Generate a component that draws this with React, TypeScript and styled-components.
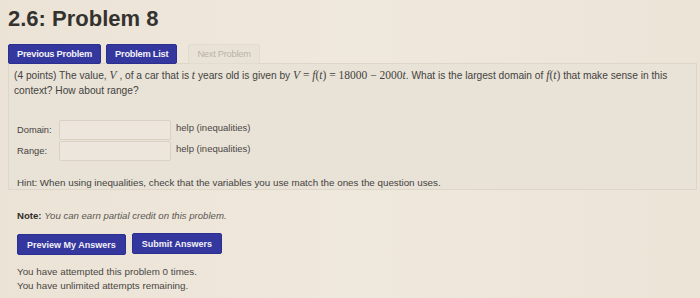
import styled, { createGlobalStyle } from "styled-components";

const Global = createGlobalStyle`
  html, body {
    margin: 0;
    padding: 0;
    background: #ece5d9;
  }
  body {
    font-family: "Liberation Sans", Arial, sans-serif;
    color: #3c3a37;
  }
`;

const Page = styled.div`
  width: 700px;
  height: 298px;
  padding: 6px 3px 0 8px;
  box-sizing: border-box;
  overflow: hidden;
  background: linear-gradient(90deg, #ebe3d6 0%, #efe8dc 50%, #ebe4d7 100%);
`;

const Title = styled.h1`
  margin: 0 0 12px 0;
  font-size: 22px;
  font-weight: 600;
  color: #34322f;
  line-height: 26px;
`;

const NavBar = styled.div`
  display: flex;
  gap: 5px;
  align-items: center;
`;

const NavButton = styled.button<{ $disabled?: boolean }>`
  height: 20px;
  padding: 0 8px;
  border-radius: 2px;
  font-family: "Liberation Sans", Arial, sans-serif;
  font-size: 9.3px;
  font-weight: ${(p) => (p.$disabled ? 400 : 700)};
  letter-spacing: -0.25px;
  border: 1px solid ${(p) => (p.$disabled ? "#e2dccf" : "#2b2f8f")};
  background: ${(p) => (p.$disabled ? "#e9e3d7" : "#33379e")};
  color: ${(p) => (p.$disabled ? "#b9b3a8" : "#f3f1f6")};
  margin-left: ${(p) => (p.$disabled ? "6px" : "0")};
`;

const Panel = styled.div`
  margin-top: -1px;
  border: 1px solid #ddd6c9;
  background: #e8e2d7;
  padding: 4px 10px 1px 5px;
  font-size: 10.2px;
  color: #45423e;
`;

const Question = styled.p`
  margin: 0;
  line-height: 15px;
`;

const M = styled.span`
  font-family: "Liberation Serif", "Times New Roman", serif;
  font-style: italic;
  font-size: 11.5px;
`;

const MR = styled.span`
  font-family: "Liberation Serif", "Times New Roman", serif;
  font-size: 11.5px;
`;

const Fields = styled.div`
  display: grid;
  grid-template-columns: 37px 112px auto;
  row-gap: 1px;
  column-gap: 5px;
  align-items: center;
  margin: 22px 0 0 3px;
`;

const Label = styled.span`
  font-size: 9.3px;
`;

const Input = styled.div`
  height: 20px;
  box-sizing: border-box;
  border: 1px solid #d8d1c4;
  border-radius: 2px;
  background: #ece6dc;
`;

const Help = styled.span`
  font-size: 9.5px;
  color: #4a4743;
  margin-top: -5px;
`;

const Hint = styled.p`
  margin: 16px 0 0 3px;
  font-size: 9.8px;
  line-height: 11px;
`;

const Note = styled.p`
  margin: 20px 0 0 9px;
  font-size: 9.6px;
  line-height: 12px;
  color: #45423e;
  b {
    color: #2f2d2a;
  }
  i {
    color: #5a5651;
  }
`;

const Actions = styled.div`
  display: flex;
  gap: 6px;
  margin: 12px 0 0 9px;
  align-items: flex-start;
`;

const ActionButton = styled.button<{ $lift?: boolean }>`
  height: 21px;
  padding: 0 9px;
  border-radius: 2px;
  border: 1px solid #2b2f8f;
  background: #33379e;
  color: #f3f1f6;
  font-family: "Liberation Sans", Arial, sans-serif;
  font-size: 9px;
  font-weight: 700;
  margin-top: ${(p) => (p.$lift ? "-1px" : "0")};
`;

const Attempts = styled.div`
  margin: 10px 0 0 9px;
  font-size: 9.8px;
  line-height: 14px;
  color: #4a4743;
`;

export default function App() {
  return (
    <>
      <Global />
      <Page>
        <Title>2.6: Problem 8</Title>
        <NavBar>
          <NavButton>Previous Problem</NavButton>
          <NavButton>Problem List</NavButton>
          <NavButton $disabled>Next Problem</NavButton>
        </NavBar>
        <Panel>
          <Question>
            (4 points) The value, <M>V</M>&nbsp;, of a car that is <M>t</M> years old is given by{" "}
            <M>V</M>&nbsp;<MR>=</MR>&nbsp;<M>f</M>
            <MR>(</MR>
            <M>t</M>
            <MR>)</MR>&nbsp;<MR>=&nbsp;18000&nbsp;−&nbsp;2000</MR>
            <M>t</M>. What is the largest domain of <M>f</M>
            <MR>(</MR>
            <M>t</M>
            <MR>)</MR> that make sense in this context? How about range?
          </Question>
          <Fields>
            <Label>Domain:</Label>
            <Input />
            <Help>help (inequalities)</Help>
            <Label>Range:</Label>
            <Input />
            <Help>help (inequalities)</Help>
          </Fields>
          <Hint>Hint: When using inequalities, check that the variables you use match the ones the question uses.</Hint>
        </Panel>
        <Note>
          <b>Note:</b> <i>You can earn partial credit on this problem.</i>
        </Note>
        <Actions>
          <ActionButton>Preview My Answers</ActionButton>
          <ActionButton $lift>Submit Answers</ActionButton>
        </Actions>
        <Attempts>
          You have attempted this problem 0 times.
          <br />
          You have unlimited attempts remaining.
        </Attempts>
      </Page>
    </>
  );
}
